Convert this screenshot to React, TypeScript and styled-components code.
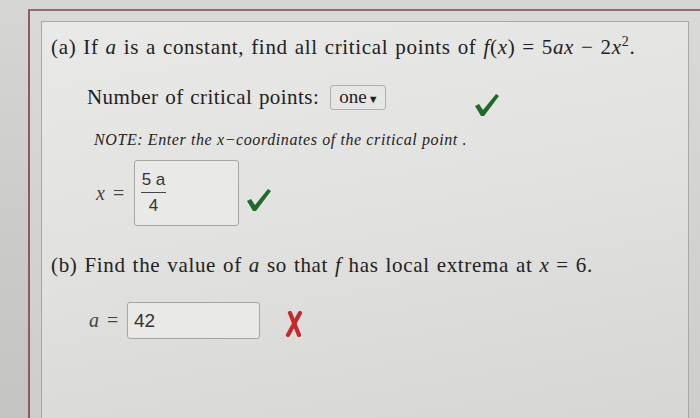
import React from "react";
import styled, { createGlobalStyle } from "styled-components";

const Global = createGlobalStyle`
  html, body {
    margin: 0;
    padding: 0;
    background: #cfcfcd;
    overflow: hidden;
  }
  #root {
    width: 700px;
    height: 418px;
  }
`;

const Screen = styled.div`
  width: 700px;
  height: 418px;
  padding: 9px 0 0 28px;
  box-sizing: border-box;
  background: linear-gradient(180deg, #d6d6d4 0%, #cacac8 60%, #c4c4c2 100%);
`;

const Frame = styled.div`
  height: 100%;
  border-left: 2px solid #8e5a60;
  border-top: 2px solid #9a6a70;
  background: linear-gradient(180deg, #d9d9d7 0%, #cdcdcb 100%);
  padding: 10px 10px 0 11px;
  box-sizing: border-box;
`;

const Panel = styled.div`
  width: 648px;
  height: 100%;
  border: 1px solid #a8a8a6;
  border-bottom: none;
  background: linear-gradient(170deg, #e9e9e7 0%, #e2e2e0 45%, #d6d6d4 100%);
  box-sizing: border-box;
  padding: 7px 0 0 9px;
  font-family: "Liberation Serif", "DejaVu Serif", serif;
  color: #222;
`;

const Question = styled.div<{ $mt?: number }>`
  font-size: 21px;
  line-height: 26px;
  letter-spacing: 0.68px;
  word-spacing: 1px;
  margin-top: ${(p) => p.$mt ?? 0}px;
`;

const M = styled.span`
  font-style: italic;
`;

const Sup = styled.sup`
  font-size: 14px;
`;

const Row = styled.div<{ $mt: number; $ml: number }>`
  display: flex;
  align-items: center;
  margin-top: ${(p) => p.$mt}px;
  margin-left: ${(p) => p.$ml}px;
`;

const Label = styled.span`
  font-size: 21px;
  line-height: 26px;
  letter-spacing: 0.45px;
  word-spacing: 1px;
`;

const Select = styled.div`
  margin-left: 11px;
  height: 25px;
  width: 56px;
  box-sizing: border-box;
  border: 1px solid #b0b0ae;
  border-radius: 3px;
  background: #e6e6e4;
  display: flex;
  align-items: center;
  padding-left: 8px;
  font-size: 19px;
`;

const Caret = styled.span`
  font-size: 11px;
  margin-left: 1px;
  margin-top: 3px;
`;

const Note = styled.div`
  margin-top: 21px;
  margin-left: 43px;
  font-size: 16px;
  font-style: italic;
  letter-spacing: 0.6px;
`;

const MathLabel = styled.span`
  font-size: 20px;
  color: #444;
  width: 38px;
  white-space: nowrap;
  word-spacing: 3px;
`;

const Input = styled.div<{ $w: number; $h: number }>`
  width: ${(p) => p.$w}px;
  height: ${(p) => p.$h}px;
  box-sizing: border-box;
  border: 1px solid #a6a6a4;
  border-radius: 3px;
  background: #e9e9e7;
  display: flex;
  align-items: center;
  padding-left: 6px;
  font-family: "Liberation Sans", Arial, sans-serif;
  color: #333;
`;

const Fraction = styled.div`
  display: flex;
  flex-direction: column;
  align-items: center;
  font-size: 17px;
  line-height: 20px;
`;

const Bar = styled.div`
  width: 25px;
  height: 1.5px;
  background: #444;
  margin: 2px 0 3px;
`;

const Value = styled.span`
  font-size: 19px;
`;

/* $dy shifts the mark below the row's centre line without changing the row height */
const Mark = styled.svg<{ $ml: number; $dy: number }>`
  margin-left: ${(p) => p.$ml}px;
  margin-top: ${(p) => p.$dy * 2}px;
  margin-bottom: ${(p) => -p.$dy * 2}px;
  flex-shrink: 0;
`;

const Check = ({ ml, dy }: { ml: number; dy: number }) => (
  <Mark $ml={ml} $dy={dy} width="27" height="24" viewBox="0 0 27 24">
    <path d="M2 13 L6 11 L10 17 L23 1 L26 3 L11 23 L8 23 Z" fill="#1d6a2a" />
  </Mark>
);

const Cross = ({ ml, dy }: { ml: number; dy: number }) => (
  <Mark $ml={ml} $dy={dy} width="20" height="26" viewBox="0 0 20 26">
    <path d="M6 2 L15 24" stroke="#c42a2c" strokeWidth="4.2" strokeLinecap="round" />
    <path d="M16 2 L4 24" stroke="#c42a2c" strokeWidth="4.2" strokeLinecap="round" />
  </Mark>
);

export default function App() {
  return (
    <>
      <Global />
      <Screen>
        <Frame>
          <Panel>
            <Question>
              (a) If <M>a</M> is a constant, find all critical points of <M>f</M>(<M>x</M>) = 5
              <M>ax</M> − 2<M>x</M>
              <Sup>2</Sup>.
            </Question>
            <Row $mt={24} $ml={36}>
              <Label>Number of critical points:</Label>
              <Select>
                one<Caret>▼</Caret>
              </Select>
              <Check ml={87} dy={4} />
            </Row>
            <Note>
              NOTE: Enter the <M>x</M>−coordinates of the critical point .
            </Note>
            <Row $mt={11} $ml={45}>
              <MathLabel>
                <M>x</M> =
              </MathLabel>
              <Input $w={105} $h={66}>
                <Fraction>
                  <span>5 a</span>
                  <Bar />
                  <span>4</span>
                </Fraction>
              </Input>
              <Check ml={6} dy={3.5} />
            </Row>
            <Question $mt={26}>
              (b) Find the value of <M>a</M> so that <M>f</M> has local extrema at <M>x</M> = 6.
            </Question>
            <Row $mt={24} $ml={38}>
              <MathLabel>
                <M>a</M> =
              </MathLabel>
              <Input $w={133} $h={37}>
                <Value>42</Value>
              </Input>
              <Cross ml={24} dy={1.5} />
            </Row>
          </Panel>
        </Frame>
      </Screen>
    </>
  );
}
